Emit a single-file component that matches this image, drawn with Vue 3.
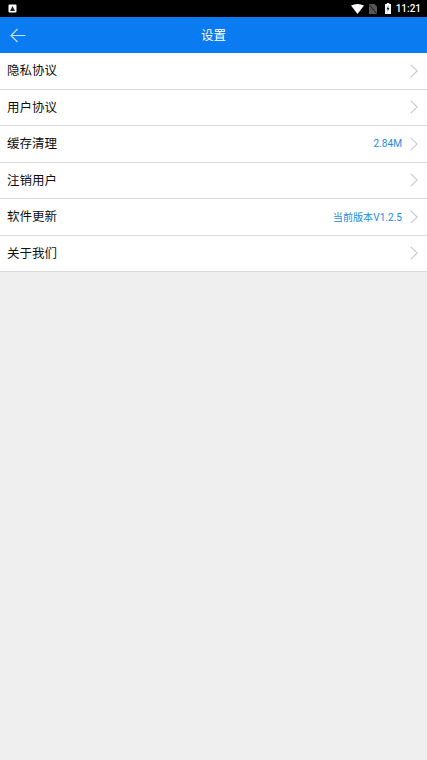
<script setup>
const rows = [
  { label: '隐私协议' },
  { label: '用户协议' },
  { label: '缓存清理', value: '2.84M' },
  { label: '注销用户' },
  { label: '软件更新', value: '当前版本V1.2.5' },
  { label: '关于我们' },
]
</script>

<template>
  <div class="page">
    <div class="statusbar">
      <svg class="notif" width="9" height="9" viewBox="0 0 9 9">
        <rect x="0.5" y="0.5" width="8" height="8" rx="1" fill="#fff" />
        <path d="M4.5 2 L7 7 H2 Z" fill="#222" />
      </svg>
      <div class="status-right">
        <svg width="13" height="10" viewBox="0 0 13 10">
          <path d="M0 1.6 Q6.5 -1.6 13 1.6 L6.5 10 Z" fill="#fff" />
        </svg>
        <svg class="sim" width="8" height="10" viewBox="0 0 8 10">
          <path d="M0 0 H5.5 L8 2.5 V10 H0 Z" fill="#565656" />
          <path d="M0.5 1 L7.5 9.5" stroke="#1c1c1c" stroke-width="1" />
        </svg>
        <svg class="batt" width="6" height="11" viewBox="0 0 6 11">
          <path d="M1.8 0 H4.2 V1 H6 V11 H0 V1 H1.8 Z" fill="#fff" />
          <path d="M3.4 2.6 L1.6 6.2 H2.8 L2.5 8.8 L4.4 5 H3.2 Z" fill="#111" />
        </svg>
        <span class="time">11:21</span>
      </div>
    </div>
    <header class="topbar">
      <svg class="back" width="16" height="15" viewBox="0 0 16 15">
        <path d="M15.5 7.5 H1 M7.5 1 L1 7.5 L7.5 14" fill="none" stroke="#bfe0ff" stroke-width="1.2" />
      </svg>
      <span class="title">设置</span>
    </header>
    <ul class="list">
      <li v-for="row in rows" :key="row.label" class="row">
        <span class="label">{{ row.label }}</span>
        <span v-if="row.value" class="value">{{ row.value }}</span>
        <svg class="chev" width="8" height="14" viewBox="0 0 8 14">
          <path d="M0.6 0.6 L7.2 7 L0.6 13.4" fill="none" stroke="#cacaca" stroke-width="1.1" />
        </svg>
      </li>
    </ul>
  </div>
</template>

<style>
html, body { margin: 0; padding: 0; }
</style>

<style scoped>
.page {
  width: 427px;
  height: 760px;
  background: #efefef;
  display: flex;
  flex-direction: column;
  overflow: hidden;
  font-family: "Roboto", "Noto Sans CJK SC", sans-serif;
}
.statusbar {
  height: 17px;
  flex: none;
  background: #000;
  display: flex;
  align-items: center;
  justify-content: space-between;
  padding: 0 6px 0 8px;
}
.status-right {
  display: flex;
  align-items: center;
}
.sim { margin-left: 5px; }
.batt { margin-left: 8px; }
.time {
  margin-left: 5px;
  color: #fff;
  font-size: 10px;
  font-weight: 500;
}
.topbar {
  height: 36px;
  flex: none;
  background: #0a7bf0;
  position: relative;
  display: flex;
  align-items: center;
  justify-content: center;
}
.back {
  position: absolute;
  left: 9.5px;
  top: 10.5px;
}
.title {
  color: #fff;
  font-size: 12.5px;
  padding-bottom: 2px;
}
.list {
  list-style: none;
  margin: 0;
  padding: 0;
  background: #fff;
}
.row {
  box-sizing: border-box;
  height: 36.5px;
  border-bottom: 1px solid #d9d9d9;
  display: flex;
  align-items: center;
  padding: 0 9px 0 7px;
}
.label {
  flex: 1;
  font-size: 12.5px;
  color: #0f0f0f;
  padding-bottom: 2px;
}
.value {
  font-size: 10.1px;
  color: #1f8ae0;
  margin-right: 8px;
}
.chev { flex: none; }
</style>
